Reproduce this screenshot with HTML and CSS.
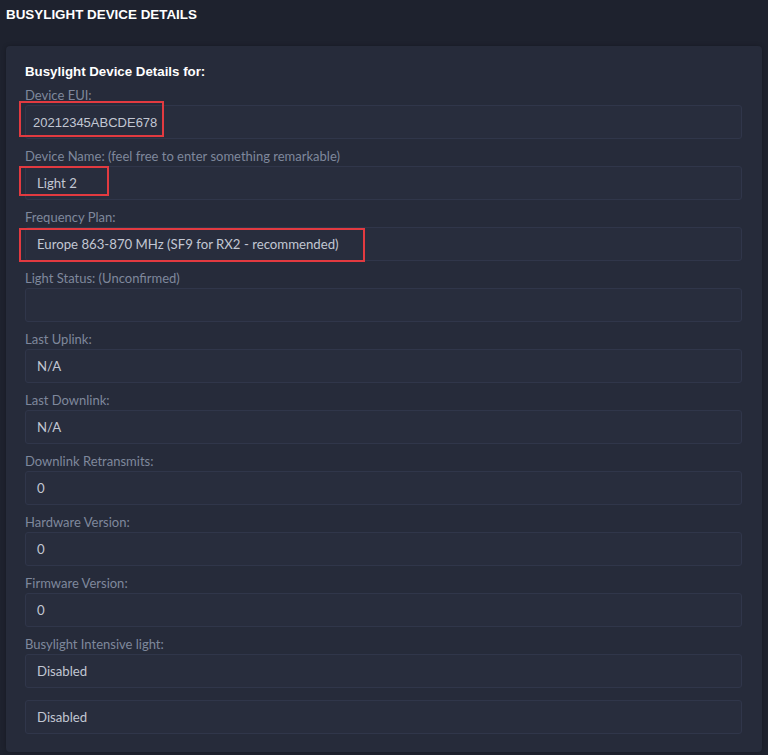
FILE: index.html
```html
<!DOCTYPE html>
<html lang="en">
<head>
<meta charset="utf-8">
<title>Busylight Device Details</title>
<link rel="stylesheet" href="styles.css">
</head>
<body>
<header class="page-head">BUSYLIGHT DEVICE DETAILS</header>
<section class="card">
  <h2 class="card-title">Busylight Device Details for:</h2>

  <div class="field">
    <label class="field-label">Device EUI:</label>
    <div class="field-input mono">20212345ABCDE678</div>
    <span class="mark mark-eui"></span>
  </div>

  <div class="field">
    <label class="field-label">Device Name: (feel free to enter something remarkable)</label>
    <div class="field-input">Light 2</div>
    <span class="mark mark-name"></span>
  </div>

  <div class="field">
    <label class="field-label">Frequency Plan:</label>
    <div class="field-input">Europe 863-870 MHz (SF9 for RX2 - recommended)</div>
    <span class="mark mark-freq"></span>
  </div>

  <div class="field">
    <label class="field-label">Light Status: (Unconfirmed)</label>
    <div class="field-input"></div>
  </div>

  <div class="field">
    <label class="field-label">Last Uplink:</label>
    <div class="field-input">N/A</div>
  </div>

  <div class="field">
    <label class="field-label">Last Downlink:</label>
    <div class="field-input">N/A</div>
  </div>

  <div class="field">
    <label class="field-label">Downlink Retransmits:</label>
    <div class="field-input">0</div>
  </div>

  <div class="field">
    <label class="field-label">Hardware Version:</label>
    <div class="field-input">0</div>
  </div>

  <div class="field">
    <label class="field-label">Firmware Version:</label>
    <div class="field-input">0</div>
  </div>

  <div class="field">
    <label class="field-label">Busylight Intensive light:</label>
    <div class="field-input">Disabled</div>
  </div>

  <div class="field field-bare">
    <div class="field-input">Disabled</div>
  </div>
</section>
</body>
</html>
```

FILE: styles.css
```css
html, body {
  margin: 0;
  padding: 0;
  background: #1e222e;
  height: 100%;
  overflow: hidden;
}

body {
  font-family: Lato, "Open Sans", sans-serif;
}

.page-head {
  font-family: "Liberation Sans", Arial, sans-serif;
  font-weight: bold;
  font-size: 13.4px;
  line-height: 16px;
  color: #ffffff;
  padding: 7px 6px 23px;
}

.card {
  margin: 0 6px;
  background: #262b3a;
  border-radius: 4px;
  padding: 18px 20px 18px 19px;
  box-shadow: 0 0 4px rgba(0, 0, 0, 0.25);
}

.card-title {
  margin: 0 0 7px;
  font-family: "Liberation Sans", Arial, sans-serif;
  font-weight: bold;
  font-size: 13.3px;
  line-height: 16px;
  color: #ffffff;
}

.field {
  position: relative;
  display: flex;
  flex-direction: column;
  gap: 1px;
  margin-bottom: 9px;
}

.field:last-child {
  margin-bottom: 0;
}

.field-bare {
  padding-top: 3px;
}

.field-label {
  font-size: 13px;
  line-height: 17px;
  color: #7f889c;
}

.field-input {
  box-sizing: border-box;
  height: 34px;
  padding: 0 11px;
  display: flex;
  align-items: center;
  background: #282d3d;
  border: 1px solid #30364a;
  border-radius: 3px;
  font-size: 13.2px;
  color: #c2c7d3;
}

.field-input.mono {
  font-family: "Liberation Sans", Arial, sans-serif;
  font-size: 13px;
  padding-left: 7px;
}

/* red annotation frames drawn over the highlighted values */
.mark {
  position: absolute;
  border: 2px solid #e23a40;
  box-sizing: border-box;
  pointer-events: none;
}

.mark-eui {
  left: -6px;
  top: 14px;
  width: 145px;
  height: 36px;
}

.mark-name {
  left: -6px;
  top: 18px;
  width: 90px;
  height: 30px;
}

.mark-freq {
  left: -6px;
  top: 19px;
  width: 346px;
  height: 34px;
}
```
